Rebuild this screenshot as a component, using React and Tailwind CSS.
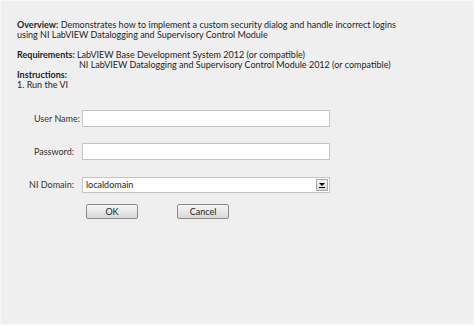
import React from "react";

function Field({ label, labelPad, children }) {
  return (
    <div className="flex items-center">
      <div className={`w-[81px] shrink-0 text-right ${labelPad}`}>{label}</div>
      {children}
    </div>
  );
}

export default function App() {
  return (
    <div className="w-[474px] h-[325px] overflow-hidden bg-[#efefef] border border-[#f7f7f7] text-[#1e1e1e] text-[9px] leading-[9.5px] font-['Lato','Liberation_Sans',sans-serif]">
      <div className="pl-[16px] pt-[19px]">
        <p>
          <span className="font-bold">Overview:</span> Demonstrates how to implement a custom security dialog and handle incorrect logins
          <br />
          using NI LabVIEW Datalogging and Supervisory Control Module
        </p>

        <div className="mt-[11px] flex">
          <span className="font-bold">Requirements:&nbsp;</span>
          <div>
            <div>LabVIEW Base Development System 2012 (or compatible)</div>
            <div className="pl-[2px]">NI LabVIEW Datalogging and Supervisory Control Module 2012 (or compatible)</div>
          </div>
        </div>

        <div className="mt-[1px] font-bold">Instructions:</div>
        <div>1. Run the VI</div>
      </div>

      <div className="mt-[21px] flex flex-col text-[#333]">
        <Field label="User Name:" labelPad="pr-[2px]">
          <div className="w-[248px] h-[17px] bg-white border border-[#c4c4c4]" />
        </Field>

        <div className="mt-[16px]">
          <Field label="Password:" labelPad="pr-[8px]">
            <div className="w-[248px] h-[17px] bg-white border border-[#c4c4c4]" />
          </Field>
        </div>

        <div className="mt-[17px]">
          <Field label="NI Domain:" labelPad="pr-[8px]">
            <div className="w-[248px] h-[16px] bg-white border border-[#c4c4c4] flex items-center justify-between pl-[3px] pr-[1px]">
              <span className="text-[#1e1e1e]">localdomain</span>
              <div className="w-[12px] h-[12px] border border-[#a8a8a8] bg-gradient-to-b from-[#f4f4f4] to-[#dcdcdc] flex flex-col items-center justify-center">
                <div className="w-0 h-0 border-l-[3px] border-r-[3px] border-t-[3px] border-l-transparent border-r-transparent border-t-black" />
                <div className="w-[6px] h-[1px] bg-black mt-[1px]" />
              </div>
            </div>
          </Field>
        </div>

        <div className="mt-[11px] flex pl-[85px] gap-[39px]">
          <button className="w-[52px] h-[15px] rounded-[2px] border border-[#8a8a8a] bg-gradient-to-b from-[#f6f6f6] to-[#d9d9d9] text-[#1e1e1e] leading-[13px]">
            OK
          </button>
          <button className="w-[52px] h-[15px] rounded-[2px] border border-[#8a8a8a] bg-gradient-to-b from-[#f6f6f6] to-[#d9d9d9] text-[#1e1e1e] leading-[13px]">
            Cancel
          </button>
        </div>
      </div>
    </div>
  );
}
